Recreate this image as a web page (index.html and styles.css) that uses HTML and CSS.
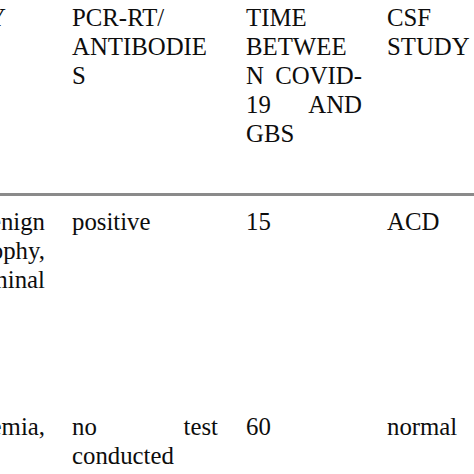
FILE: index.html
```html
<!DOCTYPE html>
<html lang="en">
<head>
<meta charset="utf-8">
<title>COVID-19 and GBS cases</title>
<link rel="stylesheet" href="styles.css">
</head>
<body>
<div class="table">
  <div class="row head">
    <div class="cell c1">COMORBIDITY</div>
    <div class="cell c2">PCR-RT/ ANTIBODIES</div>
    <div class="cell c3">TIME BETWEEN COVID-19 AND GBS</div>
    <div class="cell c4">CSF STUDY</div>
  </div>
  <div class="row body first">
    <div class="cell c1">HBP, DM, benign prostate hypertrophy, obesity, terminal renal failure</div>
    <div class="cell c2">positive</div>
    <div class="cell c3">15</div>
    <div class="cell c4">ACD</div>
  </div>
  <div class="row body">
    <div class="cell c1">HBP, DM, anemia, hypothyroidism</div>
    <div class="cell c2">no test conducted</div>
    <div class="cell c3">60</div>
    <div class="cell c4">normal</div>
  </div>
</div>
</body>
</html>
```
FILE: styles.css
```css
html, body {
  margin: 0;
  padding: 0;
  background: #ffffff;
  overflow: hidden;
}

body {
  width: 474px;
  height: 474px;
  font-family: "Liberation Serif", "Times New Roman", serif;
  font-size: 24.8px;
  line-height: 29px;
  color: #0d0d0d;
}

.table {
  margin-left: -169px;
  width: 680px;
}

.row {
  display: grid;
  grid-template-columns: 241px 174px 141px 110px;
}

.cell {
  text-align: justify;
  overflow-wrap: break-word;
  hyphens: none;
}

.c1 { padding-right: 27px; }
.c2 { padding-right: 28px; }
.c3 { padding-right: 25px; }

.head {
  padding: 3px 0 45px;
  border-bottom: 3px solid #8a8a8a;
}

.body {
  padding-top: 11px;
  box-sizing: border-box;
}

.first {
  min-height: 205px;
}
```
